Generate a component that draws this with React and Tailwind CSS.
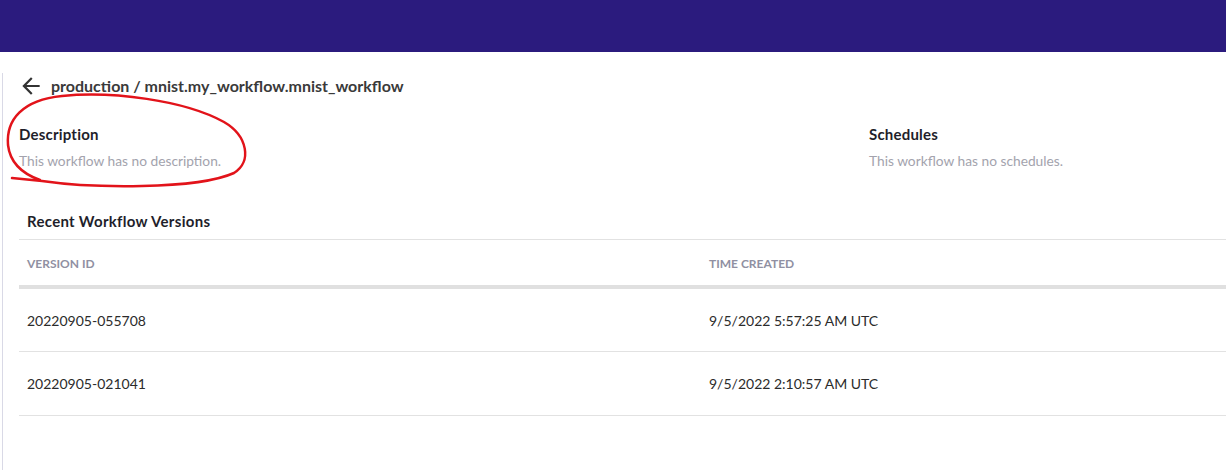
import { MdArrowBack } from "react-icons/md"

const versions = [
    { id: '20220905-055708', created: '9/5/2022 5:57:25 AM UTC' },
    { id: '20220905-021041', created: '9/5/2022 2:10:57 AM UTC' },
]

// marca a mano alzada alrededor de la descripcion
function RedCircle() {
    return (
        <svg className="absolute left-0 top-0 pointer-events-none" width="260" height="200" viewBox="0 0 260 200">
            <path
                d="M12 178 L42 181 C90 188 196 190 234 173 C252 162 248 136 224 122 C184 100 112 91 62 96 C22 100 6 120 8 145 C10 162 20 173 40 180"
                fill="none"
                stroke="#e2131a"
                strokeWidth="2.5"
                strokeLinecap="round"
            />
        </svg>
    )
}

export default function App() {
    return (
        <div className="relative min-h-[470px] overflow-hidden bg-white text-[#333] font-['Lato','Noto_Sans',sans-serif]">
            <div className="h-[52px] bg-[#2b1b7e]" />
            <div className="ml-[2px] min-h-[418px] border-l-[1.5px] border-[#d9d9e6] pl-4">
                <div className="mt-[21px] flex h-[26px] items-center">
                    <MdArrowBack size={26} className="-ml-[1px] text-[#333]" />
                    <span className="ml-[7px] text-[16px] font-bold text-[#3a3a3a]">
                        production / mnist.my_workflow.mnist_workflow
                    </span>
                </div>

                <div className="mt-[25px] grid grid-cols-[850px_1fr]">
                    <div>
                        <h2 className="text-[15px] font-bold leading-5 tracking-[0.2px] text-[#1f1f2b]">Description</h2>
                        <p className="mt-[7px] text-[13.75px] leading-5 text-[#a3a3ad]">This workflow has no description.</p>
                    </div>
                    <div>
                        <h2 className="text-[15px] font-bold leading-5 tracking-[0.2px] text-[#1f1f2b]">Schedules</h2>
                        <p className="mt-[7px] text-[13.75px] leading-5 text-[#a3a3ad]">This workflow has no schedules.</p>
                    </div>
                </div>

                <div className="mt-[40px]">
                    <h3 className="pb-2 pl-2 text-[15px] font-bold leading-5 tracking-[0.3px] text-[#1f1f2b]">Recent Workflow Versions</h3>
                    <div className="border-t border-[#e2e2e2]">
                        <div className="grid h-[49px] grid-cols-[682px_1fr] items-center border-b-4 border-[#e0e0e0] pt-[2px] text-[12px] font-bold uppercase text-[#9090a2]">
                            <div className="pl-2">Version ID</div>
                            <div className="pl-2">Time Created</div>
                        </div>
                        {versions.map((v, i) => (
                            <div
                                key={v.id}
                                className={`grid grid-cols-[682px_1fr] items-center border-b border-[#e2e2e2] text-[14px] text-[#2b2b2b] ${i === 0 ? 'h-[63px]' : 'h-[64px]'}`}>
                                <div className="pl-2">{v.id}</div>
                                <div className="pl-2">{v.created}</div>
                            </div>
                        ))}
                    </div>
                </div>
            </div>
            <RedCircle />
        </div>
    )
}
